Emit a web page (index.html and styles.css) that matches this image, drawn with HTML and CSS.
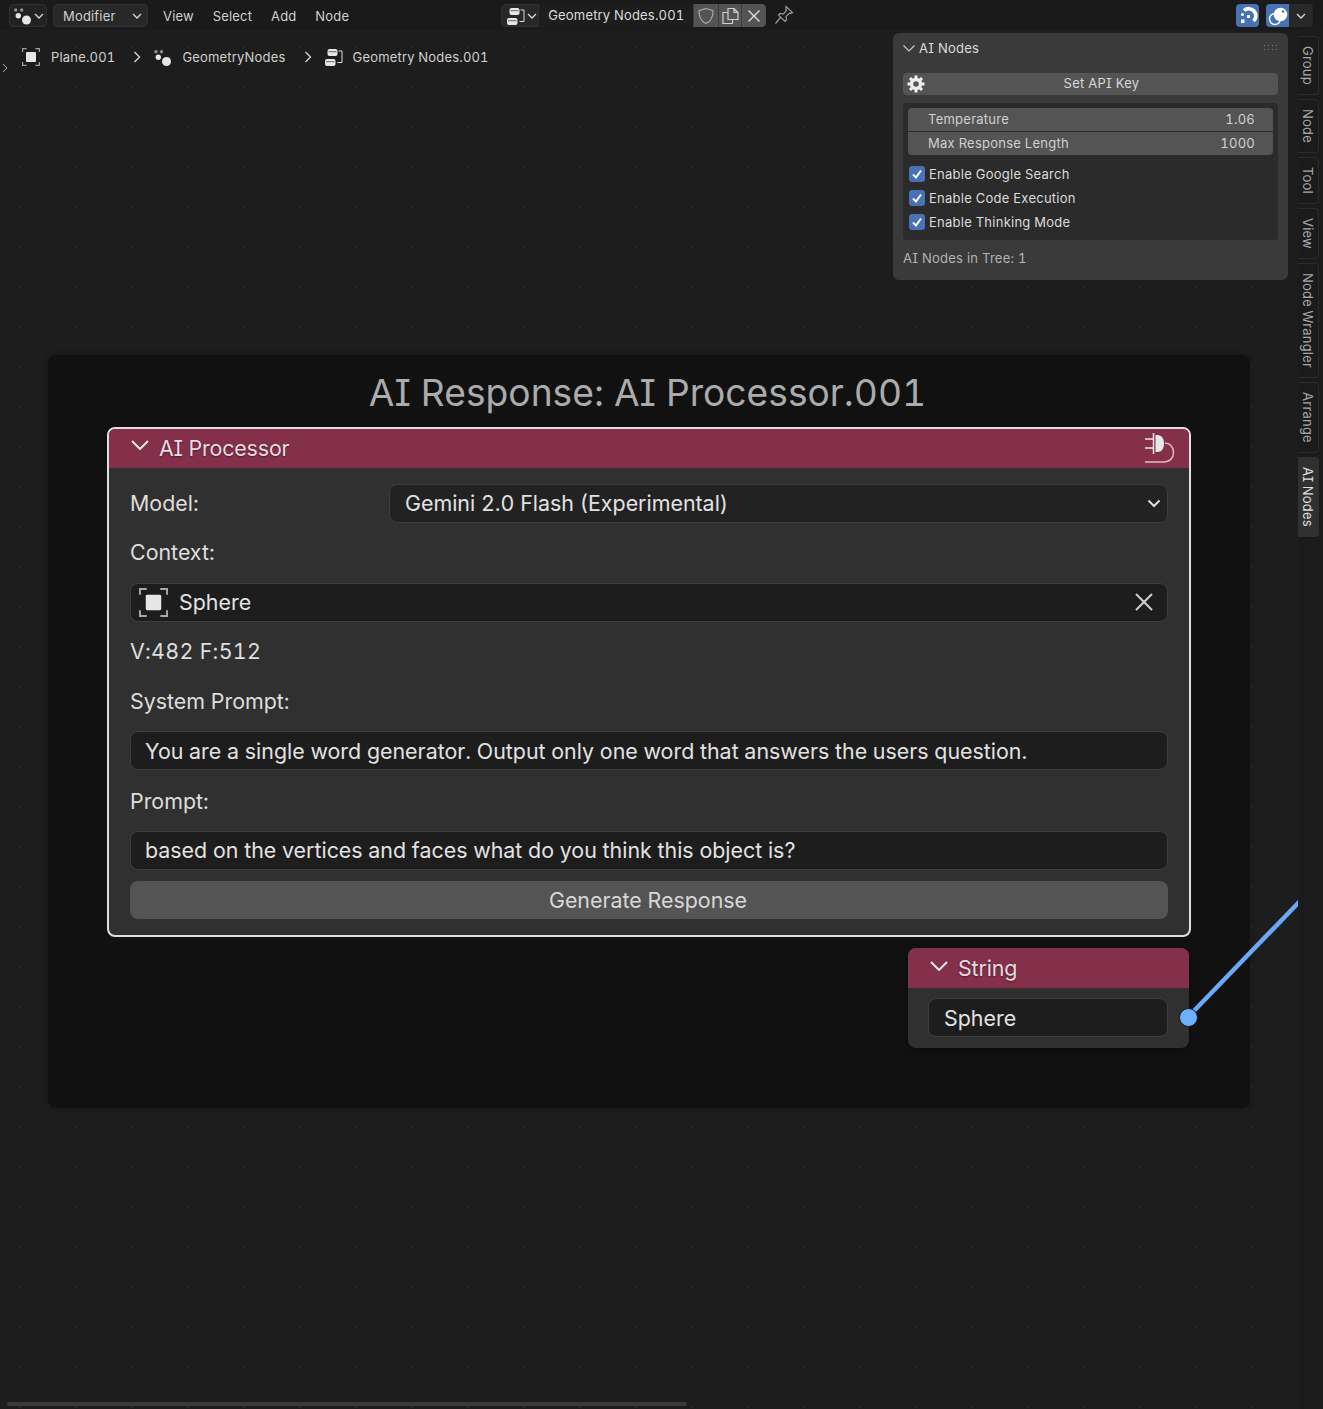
FILE: index.html
```html
<!DOCTYPE html>
<html lang="en">
<head>
<meta charset="utf-8">
<title>Blender Geometry Nodes – AI Nodes</title>
<link rel="stylesheet" href="styles.css">
</head>
<body>
<div class="editor">
  <header class="topbar">
    <button class="hbtn mode-btn">
      <svg class="ic18" viewBox="0 0 18 18"><circle cx="2.700" cy="3" r="1.700" fill="#8f8f8f"/><circle cx="8.700" cy="3" r="1.700" fill="#8f8f8f"/><circle cx="5.300" cy="8.700" r="2.700" fill="#e6e6e6"/><circle cx="13.500" cy="13" r="4.500" fill="#e6e6e6"/></svg>
      <svg class="chev" viewBox="0 0 10 6"><path d="M1 1l4 4 4-4"/></svg>
    </button>
    <button class="hbtn modifier-btn"><span>Modifier</span><svg class="chev" viewBox="0 0 10 6"><path d="M1 1l4 4 4-4"/></svg></button>
    <nav class="menu"><span>View</span><span>Select</span><span>Add</span><span>Node</span></nav>
    <div class="group-sel">
      <div class="gs-icon">
        <svg class="ic18" viewBox="0 0 18 18"><rect x="2.500" y="1" width="10" height="7" rx="2" fill="#e6e6e6"/><rect x="0" y="11" width="10.500" height="7" rx="2" fill="#e6e6e6"/><rect x="3.500" y="3.200" width="8" height="1" fill="#666"/><rect x="1" y="13.200" width="8.500" height="1" fill="#666"/><path d="M13.500 3H17V14.500H12.500" fill="none" stroke="#ddd" stroke-width="1"/></svg>
        <svg class="chev" viewBox="0 0 10 6"><path d="M1 1l4 4 4-4"/></svg>
      </div>
      <div class="gs-name">Geometry Nodes.001</div>
      <div class="gs-act gs-shield">
        <svg class="ic18" viewBox="0 0 18 18"><path d="M9 1.500l7 2.200c0 6.500-1.500 10.500-7 12.800C3.500 14.200 2 10.200 2 3.700z" fill="none" stroke="#a8a8a8" stroke-width="1.200"/></svg>
      </div>
      <div class="gs-act gs-copy">
        <svg class="ic18" viewBox="0 0 18 18"><path d="M7 1.500h6l4 4V12.500H7z M13 1.500v4h4" fill="none" stroke="#cfcfcf" stroke-width="1.200"/><path d="M7 5.500H2V16.500h9.500V12.500" fill="none" stroke="#cfcfcf" stroke-width="1.200"/></svg>
      </div>
      <div class="gs-act gs-last">
        <svg class="ic18" viewBox="0 0 18 18"><path d="M3.500 3.500l11 11M14.500 3.500l-11 11" stroke="#e0e0e0" stroke-width="1.400"/></svg>
      </div>
    </div>
    <svg class="pin" viewBox="0 0 20 20"><path d="M12 1.500l6.500 6-2 1-1-.5-3.500 3.500.5 3.500-1.500 1.500-6.500-6.500 1.500-1.500 3.500.5 3-3.500-.5-1z M6.500 12.500L1.500 18.500" fill="none" stroke="#9a9a9a" stroke-width="1.200"/></svg>
    <div class="right-tools">
      <div class="blue-btn">
        <svg class="ic20" viewBox="0 0 20 20"><path d="M6 4.500a7 7 0 0 1 9.500 10.500" fill="none" stroke="#fff" stroke-width="3.600"/><path d="M9 9h3v3H9zM3 13.500h3.500V17H3z" fill="#fff"/><circle cx="4.500" cy="8.500" r="1.500" fill="#fff"/></svg>
      </div>
      <div class="overlay-btn">
        <div class="blue-btn blue-left">
          <svg class="ic20" viewBox="0 0 20 20"><circle cx="7" cy="13" r="5.500" fill="none" stroke="#fff" stroke-width="1.400"/><circle cx="12.500" cy="8.500" r="6.800" fill="#fff"/><circle cx="15" cy="5.500" r="1.300" fill="#4772b3"/></svg>
        </div>
        <div class="overlay-drop"><svg class="chev" viewBox="0 0 10 6"><path d="M1 1l4 4 4-4"/></svg></div>
      </div>
    </div>
  </header>

  <div class="crumbs">
    <svg class="ic18" viewBox="0 0 18 18"><rect x="4" y="4" width="10" height="10" rx="1" fill="#e6e6e6"/><path d="M.6 4V.6h4M13.400 .6h4v3.400M17.400 14v3.400h-4M4.600 17.400h-4V14" fill="none" stroke="#9f9f9f" stroke-width="1.200"/></svg>
    <span class="crumb">Plane.001</span>
    <svg class="crumb-sep" viewBox="0 0 8 12"><path d="M1.500 1l5 5-5 5"/></svg>
    <svg class="ic18" viewBox="0 0 18 18"><circle cx="2" cy="3.700" r="1.700" fill="#8f8f8f"/><circle cx="7.500" cy="3.700" r="1.700" fill="#8f8f8f"/><circle cx="4.300" cy="9.300" r="2.700" fill="#e6e6e6"/><circle cx="12.500" cy="13.500" r="4.500" fill="#e6e6e6"/></svg>
    <span class="crumb">GeometryNodes</span>
    <svg class="crumb-sep" viewBox="0 0 8 12"><path d="M1.500 1l5 5-5 5"/></svg>
    <svg class="ic18" viewBox="0 0 18 18"><rect x="2.500" y="1" width="10" height="7" rx="2" fill="#e6e6e6"/><rect x="0" y="11" width="10.500" height="7" rx="2" fill="#e6e6e6"/><rect x="3.500" y="3.200" width="8" height="1" fill="#666"/><rect x="1" y="13.200" width="8.500" height="1" fill="#666"/><path d="M13.500 3H17V14.500H12.500" fill="none" stroke="#ddd" stroke-width="1"/></svg>
    <span class="crumb">Geometry Nodes.001</span>
  </div>
  <svg class="region-arrow" viewBox="0 0 6 10"><path d="M1 1l4 4-4 4"/></svg>

  <section class="frame">
    <h1 class="frame-title">AI Response: AI Processor.001</h1>
  </section>

  <article class="node node-ai">
    <div class="node-head">
      <svg class="node-chev" viewBox="0 0 18 10"><path d="M1 1l8 8 8-8"/></svg>
      <span>AI Processor</span>
      <svg class="plug" viewBox="0 0 30 31"><path d="M10.500 2h2c4 0 6.500 3.500 6.500 8.500S16.500 19 12.500 19h-2z" fill="#e8e8e8"/><path d="M8.500 0v21M0 6h8.500M0 15h8.500" stroke="#e8e8e8" stroke-width="1.500"/><path d="M20 10c5 .5 8.500 4 8.500 10 0 5-4 9-9.500 9H0" fill="none" stroke="#e3b8c6" stroke-width="1.500"/></svg>
    </div>
    <div class="node-body">
      <div class="row row-split">
        <span class="row-label">Model:</span>
        <div class="field select"><span>Gemini 2.0 Flash (Experimental)</span><svg class="sel-chev" viewBox="0 0 14 9"><path d="M1.500 1.500L7 7l5.500-5.500"/></svg></div>
      </div>
      <div class="row">Context:</div>
      <div class="field obj-field">
        <svg class="obj-ic" viewBox="0 0 30 30"><rect x="7" y="7" width="16" height="16" rx="1.500" fill="#e6e6e6"/><path d="M1 7V1h7M22 1h7v6M29 23v6h-7M8 29H1v-6" fill="none" stroke="#a8a8a8" stroke-width="2"/></svg>
        <span class="obj-name">Sphere</span>
        <svg class="x-ic" viewBox="0 0 18 18"><path d="M1 1l16 16M17 1L1 17" stroke="#cfcfcf" stroke-width="2" fill="none"/></svg>
      </div>
      <div class="row row-stats">V:482 F:512</div>
      <div class="row">System Prompt:</div>
      <div class="field field-sys">You are a single word generator. Output only one word that answers the users question.</div>
      <div class="row row-prompt">Prompt:</div>
      <div class="field">based on the vertices and faces what do you think this object is?</div>
      <div class="gen-btn">Generate Response</div>
    </div>
  </article>

  <article class="node node-string">
    <div class="node-head">
      <svg class="node-chev" viewBox="0 0 18 10"><path d="M1 1l8 8 8-8"/></svg>
      <span>String</span>
    </div>
    <div class="node-body">
      <div class="field">Sphere</div>
    </div>
  </article>

  <svg class="wire" viewBox="0 0 125 125"><path d="M10 118L122 2" stroke="#6aa9f5" stroke-width="4.500"/></svg>
  <div class="socket"></div>

  <aside class="sidebar">
    <div class="tab">Group</div>
    <div class="tab">Node</div>
    <div class="tab">Tool</div>
    <div class="tab">View</div>
    <div class="tab">Node Wrangler</div>
    <div class="tab">Arrange</div>
    <div class="tab tab-on">AI Nodes</div>
  </aside>

  <section class="panel">
    <div class="panel-head">
      <svg class="panel-chev" viewBox="0 0 12 7"><path d="M.5 .5L6 6l5.500-5.500"/></svg>
      <span>AI Nodes</span>
      <svg class="grip" viewBox="0 0 14 6"><g fill="#777"><rect x="0" y="0" width="1" height="1"/><rect x="4" y="0" width="1" height="1"/><rect x="8" y="0" width="1" height="1"/><rect x="12" y="0" width="1" height="1"/><rect x="0" y="4" width="1" height="1"/><rect x="4" y="4" width="1" height="1"/><rect x="8" y="4" width="1" height="1"/><rect x="12" y="4" width="1" height="1"/></g></svg>
    </div>
    <div class="api-btn">
      <svg class="gear" viewBox="0 0 18 18"><circle cx="9" cy="9" r="4.500" fill="none" stroke="#eee" stroke-width="3.400"/><g stroke="#eee" stroke-width="3"><path d="M9 .5v3M9 14.500v3M.5 9h3M14.500 9h3M3 3l2.100 2.100M12.900 12.900L15 15M15 3l-2.100 2.100M5.100 12.900L3 15"/></g></svg>
      <span>Set API Key</span>
    </div>
    <div class="box">
      <div class="num-group">
        <div class="num"><span>Temperature</span><span>1.06</span></div>
        <div class="num"><span>Max Response Length</span><span>1000</span></div>
      </div>
      <div class="checks">
        <div class="check"><svg class="cb" viewBox="0 0 16 16"><rect width="16" height="16" rx="3" fill="#4772b3"/><path d="M4 8.500l3 3 5-7" fill="none" stroke="#fff" stroke-width="2"/></svg><span>Enable Google Search</span></div>
        <div class="check"><svg class="cb" viewBox="0 0 16 16"><rect width="16" height="16" rx="3" fill="#4772b3"/><path d="M4 8.500l3 3 5-7" fill="none" stroke="#fff" stroke-width="2"/></svg><span>Enable Code Execution</span></div>
        <div class="check"><svg class="cb" viewBox="0 0 16 16"><rect width="16" height="16" rx="3" fill="#4772b3"/><path d="M4 8.500l3 3 5-7" fill="none" stroke="#fff" stroke-width="2"/></svg><span>Enable Thinking Mode</span></div>
      </div>
    </div>
    <div class="panel-foot">AI Nodes in Tree: 1</div>
  </section>

  <div class="hscroll"></div>
</div>
</body>
</html>
```
FILE: styles.css
```css
* { box-sizing: border-box; }
html, body { margin: 0; padding: 0; background: #1d1d1d; }
.editor {
  position: relative;
  width: 1323px;
  height: 1409px;
  overflow: hidden;
  font-family: Inter, "Liberation Sans", sans-serif;
  font-feature-settings: "cv08", "tnum";
  color: #d8d8d8;
  background-color: #1d1d1d;
  background-image: radial-gradient(circle at 20px 7px, #272727 0, #272727 1px, transparent 1.2px);
  background-size: 28px 40px;
}
svg { display: block; flex: none; }
.ic18 { width: 18px; height: 18px; }
.ic20 { width: 20px; height: 20px; }
.chev { width: 10px; height: 6px; fill: none; stroke: #d8d8d8; stroke-width: 1.3; }

/* top bar */
.topbar {
  height: 31px;
  padding: 4px 10px 0 9px;
  display: flex;
  align-items: flex-start;
  border-top: 1px solid #262626;
  margin-top: -1px;
  background: #1a1a1a;
  font-size: 13px;
  letter-spacing: .18px;
}
.hbtn {
  height: 23px;
  border: 1px solid #303030;
  border-radius: 4px;
  background: #222;
  color: #d0d0d0;
  font: inherit;
  letter-spacing: inherit;
  font-feature-settings: inherit;
  display: flex;
  align-items: center;
  padding: 0;
}
.mode-btn { width: 38px; padding-left: 3px; gap: 3px; }
.modifier-btn { width: 95px; margin-left: 6px; padding: 0 5px 0 9px; justify-content: space-between; background: #282828; }
.menu { display: flex; gap: 18.900px; margin-left: 15px; height: 23px; align-items: center; color: #d0d0d0; }
.group-sel {
  display: flex;
  height: 23px;
  margin-left: 152px;
  width: 265px;
  border-radius: 4px;
  overflow: hidden;
}
.gs-icon { width: 38px; background: #282828; display: flex; align-items: center; gap: 2px; padding-left: 5px; border: 1px solid #303030; border-radius: 4px 0 0 4px; }
.gs-name { width: 154px; background: #1d1d1d; padding-left: 9px; line-height: 23px; color: #dcdcdc; white-space: nowrap; }
.gs-act { background: #545454; display: flex; align-items: center; justify-content: center; border-left: 1px solid #3c3c3c; }
.gs-shield { width: 25px; }
.gs-copy { width: 23px; }
.gs-last { width: 25px; border-radius: 0 4px 4px 0; }
.pin { width: 20px; height: 20px; margin: 1px 0 0 8px; }
.right-tools { margin-left: auto; display: flex; gap: 7px; }
.blue-btn { width: 23px; height: 23px; background: #4772b3; border-radius: 4px; display: flex; align-items: center; justify-content: center; }
.overlay-btn { display: flex; width: 47px; height: 23px; border-radius: 4px; background: #282828; }
.blue-left { border-radius: 4px 0 0 4px; }
.overlay-drop { flex: 1; display: flex; align-items: center; justify-content: center; }

/* breadcrumbs */
.crumbs {
  position: absolute;
  left: 22px;
  top: 48px;
  display: flex;
  align-items: center;
  font-size: 13px;
  letter-spacing: .18px;
  color: #d0d0d0;
  height: 18px;
}
.crumb { margin-left: 10px; white-space: nowrap; }
.crumb:first-of-type { margin-left: 11px; }
.crumb-sep { width: 8px; height: 12px; margin: 0 13px 0 18px; fill: none; stroke: #d8d8d8; stroke-width: 1.300; }
.region-arrow { position: absolute; left: 2px; top: 63px; width: 6px; height: 10px; fill: none; stroke: #aaa; stroke-width: 1; }

/* frame */
.frame {
  position: absolute;
  left: 48px;
  top: 355px;
  width: 1202px;
  height: 753px;
  background: #111;
  border-radius: 8px;
  box-shadow: 0 0 6px rgba(0,0,0,.25);
  padding-top: 14px;
}
.frame-title {
  margin: 0;
  text-align: center;
  font-size: 37.200px;
  line-height: 48px;
  font-weight: 400;
  color: #ababab;
  white-space: nowrap;
  padding-right: 3px;
}

/* nodes */
.node {
  position: absolute;
  background: #303030;
  border-radius: 8px;
  overflow: hidden;
  font-size: 21.400px;
  color: #dedede;
}
.node-ai { left: 107px; top: 427px; width: 1084px; height: 510px; border: 2px solid #dfdfdf; }
.node-string { left: 908px; top: 948px; width: 281px; height: 100px; box-shadow: 0 2px 8px rgba(0,0,0,.35); }
.node-head {
  height: 39px;
  background: #85304b;
  display: flex;
  align-items: center;
  padding-left: 22px;
  gap: 10px;
  color: #e6dce0;
  position: relative;
  letter-spacing: -.15px;
  text-shadow: 0 1px 2px rgba(0,0,0,.45);
}
.node-ai .node-head { padding-bottom: 2px; }
.node-string .node-head { height: 40px; }
.node-chev { width: 18px; height: 10px; margin-top: -5px; fill: none; stroke: #e8e8e8; stroke-width: 2; }
.plug { position: absolute; right: 14px; top: 4px; width: 30px; height: 31px; }
.node-body { padding: 16px 21px; display: flex; flex-direction: column; gap: 10.450px; }
.node-string .node-body { padding: 10px 21px 0 20px; }
.node-string .field { padding: 1px 14px 0 15px; }
.row { height: 39px; line-height: 38px; white-space: nowrap; }
.row-stats { line-height: 39px; letter-spacing: .3px; }
.row-prompt { margin-top: 1.200px; }
.row-split { display: flex; }
.row-label { width: 259px; }
.field {
  height: 39px;
  line-height: 37px;
  background: #1d1d1d;
  border: 1px solid #3d3d3d;
  border-radius: 8px;
  padding: 0 14px;
  white-space: nowrap;
  color: #e2e2e2;
}
.field-sys { line-height: 38px; }
.select { flex: 1; display: flex; justify-content: space-between; align-items: center; background: #222; padding-left: 15px; }
.sel-chev { width: 14px; height: 9px; margin-right: -8px; fill: none; stroke: #e0e0e0; stroke-width: 2; }
.obj-field { display: flex; align-items: center; padding-left: 8px; padding-right: 14px; }
.obj-ic { width: 29px; height: 29px; }
.obj-name { margin-left: 11px; flex: 1; }
.x-ic { width: 18px; height: 18px; }
.gen-btn {
  height: 38px;
  line-height: 38px;
  text-align: center;
  background: #545454;
  border-radius: 8px;
  color: #d8d8d8;
  padding-right: 2px;
}
.wire { position: absolute; left: 1180px; top: 897px; width: 125px; height: 125px; }
.socket {
  position: absolute;
  left: 1179px;
  top: 1008px;
  width: 19px;
  height: 19px;
  border-radius: 50%;
  background: #6cb0ff;
  border: 1.500px solid #1a1a1a;
}

/* sidebar */
.sidebar {
  position: absolute;
  left: 1298px;
  top: 31px;
  bottom: 0;
  width: 25px;
  background: #1b1b1b;
  padding-top: 5px;
  display: flex;
  flex-direction: column;
  gap: 4.100px;
}
.tab {
  writing-mode: vertical-rl;
  width: 21px;
  padding: 9px 0;
  font-size: 13px;
  letter-spacing: .2px;
  color: #a8a8a8;
  line-height: 21px;
  border: 1px solid #2b2b2b;
  border-left: 0;
  border-radius: 0 4px 4px 0;
  white-space: nowrap;
}
.tab-on { background: #303030; color: #e0e0e0; border-color: #303030; }

/* panel */
.panel {
  position: absolute;
  left: 893px;
  top: 33px;
  width: 395px;
  height: 247px;
  background: #3a3a3a;
  border-radius: 6px;
  padding: 0 10px;
  font-size: 13px;
  letter-spacing: .25px;
  color: #dcdcdc;
}
.panel-head { height: 30px; display: flex; align-items: center; gap: 4px; }
.panel-chev { width: 12px; height: 7px; fill: none; stroke: #cfcfcf; stroke-width: 1.100; }
.grip { width: 14px; height: 6px; margin-left: auto; }
.api-btn {
  margin-top: 10px;
  height: 22px;
  background: #545454;
  border-radius: 4px;
  display: flex;
  align-items: center;
  padding-left: 4px;
  color: #d8d8d8;
  line-height: 20px;
}
.gear { width: 18px; height: 18px; }
.api-btn span { flex: 1; text-align: center; padding-bottom: 2px; }
.box { margin-top: 8px; height: 137px; background: #2b2b2b; border-radius: 4px; padding: 5px; }
.num-group { border-radius: 4px; overflow: hidden; display: flex; flex-direction: column; gap: 1px; }
.num {
  height: 23px;
  background: #545454;
  display: flex;
  justify-content: space-between;
  align-items: center;
  padding: 0 18px 1px 20px;
  color: #d0d0d0;
}
.checks { margin-top: 11px; display: flex; flex-direction: column; gap: 8px; padding-left: 1px; }
.check { height: 16px; display: flex; align-items: center; gap: 4px; white-space: nowrap; }
.cb { width: 16px; height: 16px; }
.panel-foot { margin-top: 10px; line-height: 16px; color: #b4b4b4; }

.hscroll {
  position: absolute;
  left: 7px;
  top: 1402px;
  width: 680px;
  height: 4px;
  border-radius: 2px;
  background: #3a3a3a;
}
```
